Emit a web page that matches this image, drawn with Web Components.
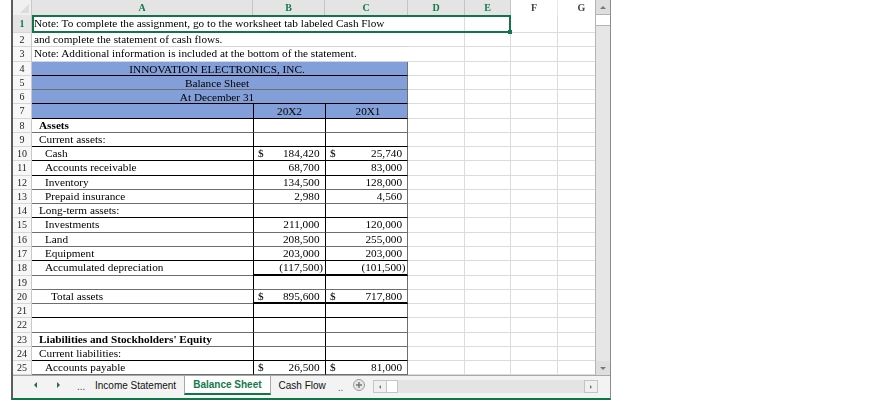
<!DOCTYPE html>
<html>
<head>
<meta charset="utf-8">
<title>Balance Sheet</title>
<style>
	html,body{ margin:0; padding:0; background:#fff; }
	body{ width:890px; height:400px; overflow:hidden; }
</style>
</head>
<body>
<x-workbook>
	<x-head></x-head>
	<x-row n="1" plain active a="Note: To complete the assignment, go to the worksheet tab labeled Cash Flow"></x-row>
	<x-row n="2" plain a="and complete the statement of cash flows."></x-row>
	<x-row n="3" plain a="Note: Additional information is included at the bottom of the statement."></x-row>
	<x-row n="4" title a="INNOVATION ELECTRONICS, INC."></x-row>
	<x-row n="5" title line="g" a="Balance Sheet"></x-row>
	<x-row n="6" title a="At December 31"></x-row>
	<x-row n="7" blue b="20X2" c="20X1"></x-row>
	<x-row n="8" line="g" indent="1" strong a="Assets"></x-row>
	<x-row n="9" indent="1" a="Current assets:"></x-row>
	<x-row n="10" indent="2" a="Cash" d1="$" b="184,420" d2="$" c="25,740"></x-row>
	<x-row n="11" indent="2" a="Accounts receivable" b="68,700" c="83,000"></x-row>
	<x-row n="12" line="g" indent="2" a="Inventory" b="134,500" c="128,000"></x-row>
	<x-row n="13" line="g" indent="2" a="Prepaid insurance" b="2,980" c="4,560"></x-row>
	<x-row n="14" indent="1" a="Long-term assets:"></x-row>
	<x-row n="15" line="g" indent="2" a="Investments" b="211,000" c="120,000"></x-row>
	<x-row n="16" line="g" indent="2" a="Land" b="208,500" c="255,000"></x-row>
	<x-row n="17" indent="2" a="Equipment" b="203,000" c="203,000"></x-row>
	<x-row n="18" line="h" indent="2" a="Accumulated depreciation" b="(117,500)" c="(101,500)"></x-row>
	<x-row n="19" line="g"></x-row>
	<x-row n="20" line="h" indent="3" a="Total assets" d1="$" b="895,600" d2="$" c="717,800"></x-row>
	<x-row n="21"></x-row>
	<x-row n="22" line="g"></x-row>
	<x-row n="23" line="g" indent="1" strong a="Liabilities and Stockholders' Equity"></x-row>
	<x-row n="24" indent="1" a="Current liabilities:"></x-row>
	<x-row n="25" line="g" indent="2" a="Accounts payable" d1="$" b="26,500" d2="$" c="81,000"></x-row>
	<x-tabbar slot="tabs">
		<x-tab>Income Statement</x-tab>
		<x-tab active>Balance Sheet</x-tab>
		<x-tab>Cash Flow</x-tab>
	</x-tabbar>
</x-workbook>

<script>
const COLS = '19px 221px 72px 83px 57px 46px 47px 38px';
const ROW_H = '14.27px';

class XWorkbook extends HTMLElement{
	constructor(){
		super();
		const root = this.attachShadow({mode:'open'});
		root.innerHTML = `
			<style>
				:host{
					display:block;
					box-sizing:border-box;
					width:600px;
					height:400px;
					margin-left:11px;
					border-left:2px solid #5c5c5c;
					border-right:1px solid #8c8c8c;
					border-bottom:2px solid #12754a;
					font:11.25px "Liberation Serif", serif;
					color:#000;
					filter:blur(.25px);
					--cols:${COLS};
					--row-h:${ROW_H};
				}
				.top{ display:flex; height:376px; border-bottom:1px solid #a8a8a8; box-sizing:border-box; }
				.grid{ position:relative; width:583px; overflow:hidden; }
				.sel{
					position:absolute; left:19px; top:15px; width:479px; height:18px;
					box-sizing:border-box; border:2px solid #12754a; pointer-events:none;
				}
				.sel::after{
					content:''; position:absolute; right:-3px; bottom:-3px;
					width:4px; height:4px; background:#12754a;
				}
				.vbar{
					width:14px; display:flex; flex-direction:column;
					background:#e6e6e6; border-left:1px solid #b4b4b4; box-sizing:content-box;
				}
				.vbtn{ height:14px; background:#dedede; display:flex; align-items:center; justify-content:center; }
				.vthumb{ height:10px; background:#fff; border:1px solid #b4b4b4; border-left:0; border-right:0; }
				.vtrack{ flex:1; }
				.vbtn i{ width:0; height:0; border:3px solid transparent; }
				.vbtn.up i{ border-bottom-color:#777; margin-top:-3px; }
				.vbtn.down i{ border-top-color:#777; margin-top:3px; }
			</style>
			<div class="top">
				<div class="grid"><slot></slot><div class="sel"></div></div>
				<div class="vbar">
					<div class="vbtn up"><i></i></div>
					<div class="vthumb"></div>
					<div class="vtrack"></div>
					<div class="vbtn down"><i></i></div>
				</div>
			</div>
			<slot name="tabs"></slot>
		`;
	}
}

class XHead extends HTMLElement{
	constructor(){
		super();
		const root = this.attachShadow({mode:'open'});
		const cells = ['A','B','C','D','E','F','G'].map((c,i) =>
			`<div class="c ${i<5?'on':''} ${c==='G'?'g':''}">${c}</div>`).join('');
		root.innerHTML = `
			<style>
				:host{ display:grid; grid-template-columns:var(--cols); height:15px; }
				.corner{ background:#f0f0f0; border-right:1px solid #c8c8c8; position:relative; box-sizing:border-box; }
				.corner::after{
					content:''; position:absolute; right:2px; bottom:2px; width:0; height:0;
					border-left:9px solid transparent; border-bottom:9px solid #dcdcdc;
				}
				.c{
					box-sizing:border-box; text-align:center; font:bold 10px/15px "Liberation Serif", serif;
					color:#444; border-right:1px solid #e8e8e8;
				}
				.c.g{ padding-left:10px; overflow:visible; white-space:nowrap; }
				.c.on{ background:#e4e4e4; color:#127a4c; border-right-color:#c4c4c4; }
			</style>
			<div class="corner"></div>${cells}
		`;
	}
}

class XRow extends HTMLElement{
	connectedCallback(){
		if(this.shadowRoot) return;
		const root = this.attachShadow({mode:'open'});
		const g = k => this.getAttribute(k) || '';
		const has = k => this.hasAttribute(k);
		const indent = [0,5,11,17][+g('indent')] || 0;
		const num = s => `<b class="${s.endsWith(')')?'neg':''}">${s}</b>`;
		let left;
		if(has('plain')){
			left = `<div class="over" style="grid-column:span 3">${g('a')}</div>`;
		}else if(has('title')){
			left = `<div class="title" style="grid-column:span 3">${g('a')}</div>`;
		}else{
			left = `
				<div class="k ${has('blue')?'blue':''} ${has('strong')?'strong':''}" style="padding-left:${indent+2}px">${g('a')}</div>
				<div class="k v b ${has('blue')?'blue mid':''}">${g('d1')?`<span>${g('d1')}</span>`:''}${num(g('b'))}</div>
				<div class="k v c ${has('blue')?'blue mid':''}">${g('d2')?`<span>${g('d2')}</span>`:''}${num(g('c'))}</div>`;
		}
		const heavy = g('line') === 'h';
		const line = {g:'#6e6e6e', h:'#6e6e6e'}[g('line')] || '#000';
		root.innerHTML = `
			<style>
				:host{
					display:grid; grid-template-columns:var(--cols);
					height:${has('active')?'18px':'var(--row-h)'}; grid-template-rows:minmax(0,1fr);
				}
				div{ box-sizing:border-box; min-width:0; min-height:0; border-bottom:1px solid ${line}; line-height:13px; white-space:nowrap; }
				.n{
					background:${has('active')?'#e4e4e4':'#f7f7f7'}; text-align:center; border-right:1px solid #c8c8c8;
					border-bottom-color:#d6d6d6; font-size:10px;
					color:${has('active')?'#127a4c':'#222'}; font-weight:${has('active')?'bold':'normal'};
					${has('active')?'line-height:17px;':''}
				}
				.over{ padding-left:2px; border-bottom-color:#d6d6d6; ${has('active')?'line-height:16px;':''} }
				.title{ background:#829fd9; text-align:center; border-right:1px solid #6e6e6e; padding:1px 5px 0 0; }
				.k{ overflow:visible; }
				.blue{ background:#829fd9; padding-top:1px; }
				.strong{ font-weight:bold; }
				.v{ display:flex; justify-content:flex-end; border-left:1.5px solid #000; padding-right:5.5px; position:relative;
					${heavy?'border-bottom:2px solid #000;':''} }
				.v.c{ border-right:1px solid #6e6e6e; padding-right:5px; }
				.v.mid{ justify-content:center; padding-right:0; }
				.v.c.mid{ padding-left:3px; }
				.v span{ position:absolute; left:4px; }
				.v b{ font-weight:normal; }
				.v b.neg{ margin-right:-3.5px; }
				.e{ border-right:1px solid #dcdcdc; border-bottom-color:#dcdcdc; }
			</style>
			<div class="n">${g('n')}</div>${left}
			<div class="e"></div><div class="e"></div><div class="e"></div><div class="e"></div>
		`;
	}
}

class XTabbar extends HTMLElement{
	constructor(){
		super();
		const root = this.attachShadow({mode:'open'});
		root.innerHTML = `
			<style>
				:host{
					display:flex; align-items:flex-start; height:22px; background:#f3f3f3;
					font:10px "Liberation Sans", sans-serif; color:#111;
				}
				.nav{ display:flex; align-items:center; height:18px; padding-left:21px; gap:20px; width:74px; box-sizing:border-box; flex:none; }
				.nav i{ width:0; height:0; border:3px solid transparent; }
				.nav i.l{ border-right-color:#1f6f4a; margin-left:-3px; }
				.nav i.r{ border-left-color:#1f6f4a; margin-right:-3px; }
				.dots{ color:#444; font-size:10px; margin-left:-3px; margin-top:2px; }
				.tabs{ display:flex; flex:none; height:19px; }
				.more{ width:15px; color:#127a4c; font-size:10px; margin:6px 0 0 4px; flex:none; line-height:12px; }
				.plus{ width:12px; height:12px; margin-top:3px; border-radius:50%; border:1px solid #9c9c9c; box-sizing:border-box; flex:none;
					display:flex; align-items:center; justify-content:center; background:#e6e6e6; }
				.bar{ display:flex; margin:4px 0 0 8px; height:13px; width:225px; flex:none; background:#e4e4e4; }
				.bar div{ flex:none; box-sizing:border-box; }
				.btn{ width:14px; background:#f0f0f0; border:1px solid #c4c4c4; display:flex; align-items:center; justify-content:center; }
				.btn i{ width:0; height:0; border:2px solid transparent; }
				.btn .a{ border-right-color:#777; margin-left:-2px; }
				.btn .b{ border-left-color:#777; margin-right:-2px; }
				.thumb{ width:11px; background:#fff; border:1px solid #c4c4c4; border-left:0; }
				.bar .track{ flex:1; }
			</style>
			<div class="nav"><i class="l"></i><i class="r"></i><span class="dots">...</span></div>
			<div class="tabs"><slot></slot></div>
			<span class="more">..</span>
			<div class="plus"><svg width="8" height="8" viewBox="0 0 8 8"><path d="M4 1v6M1 4h6" stroke="#777" stroke-width="1.4" fill="none"/></svg></div>
			<div class="bar">
				<div class="btn"><i class="a"></i></div><div class="thumb"></div><div class="track"></div><div class="btn"><i class="b"></i></div>
			</div>
		`;
	}
}

class XTab extends HTMLElement{
	constructor(){
		super();
		const root = this.attachShadow({mode:'open'});
		root.innerHTML = `
			<style>
				:host{ display:flex; align-items:center; padding:0 8px 1px; box-sizing:border-box; height:19px; }
				:host([active]){
					background:#fff; color:#127a4c; font-weight:bold; padding-bottom:0;
					border:1px solid #a8a8a8; border-top:0; border-bottom:2px solid #12754a;
				}
			</style>
			<slot></slot>
		`;
	}
}

customElements.define('x-workbook', XWorkbook);
customElements.define('x-head', XHead);
customElements.define('x-row', XRow);
customElements.define('x-tabbar', XTabbar);
customElements.define('x-tab', XTab);
</script>
</body>
</html>
